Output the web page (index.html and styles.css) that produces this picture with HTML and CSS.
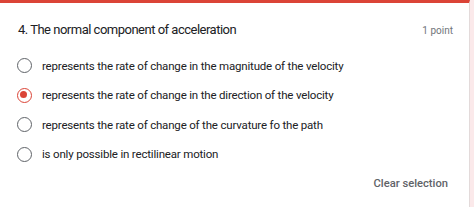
FILE: index.html
```html
<!DOCTYPE html>
<html>
<head>
<meta charset="utf-8">
<link rel="stylesheet" href="styles.css">
</head>
<body>
<div class="page">
  <div class="card">
    <div class="header">
      <div class="title">4. The normal component of acceleration</div>
      <div class="points">1 point</div>
    </div>
    <div class="options">
      <div class="option"><span class="radio"></span><span class="label">represents the rate of change in the magnitude of the velocity</span></div>
      <div class="option"><span class="radio checked"></span><span class="label">represents the rate of change in the direction of the velocity</span></div>
      <div class="option"><span class="radio"></span><span class="label">represents the rate of change of the curvature fo the path</span></div>
      <div class="option"><span class="radio"></span><span class="label">is only possible in rectilinear motion</span></div>
    </div>
    <div class="footer"><span class="clear">Clear selection</span></div>
  </div>
</div>
</body>
</html>
```
FILE: styles.css
```css
html, body { margin: 0; padding: 0; }
body { background: #fbe9ea; font-family: Roboto, "Noto Sans", sans-serif; }
.page { width: 474px; height: 207px; overflow: hidden; }
.card {
  width: 470px;
  height: 207px;
  box-sizing: border-box;
  background: #fff;
  border-top: 3px solid #db4437;
  border-right: 1px solid #e3dada;
  display: flex;
  flex-direction: column;
}
.header {
  display: flex;
  justify-content: space-between;
  align-items: baseline;
  padding: 19px 16px 0 18px;
}
.title { font-size: 13px; letter-spacing: -0.5px; color: #202124; }
.points { font-size: 10px; color: #70757a; }
.options { display: flex; flex-direction: column; padding: 14px 0 0 17px; }
.option { display: flex; align-items: center; height: 29.5px; }
.radio {
  width: 15px; height: 15px; box-sizing: border-box;
  border: 1.8px solid #5f6368; border-radius: 50%;
  margin-right: 10px; position: relative;
}
.radio.checked { border-color: #db4437; }
.radio.checked::after {
  content: ""; position: absolute; left: 2.2px; top: 2.2px;
  width: 7px; height: 7px; border-radius: 50%; background: #db4437;
}
.label { font-size: 11.5px; letter-spacing: -0.18px; color: #202124; }
.footer { display: flex; justify-content: flex-end; padding: 8px 21px 0 0; }
.clear { font-size: 11.2px; color: #5f6368; font-weight: 500; }
```
